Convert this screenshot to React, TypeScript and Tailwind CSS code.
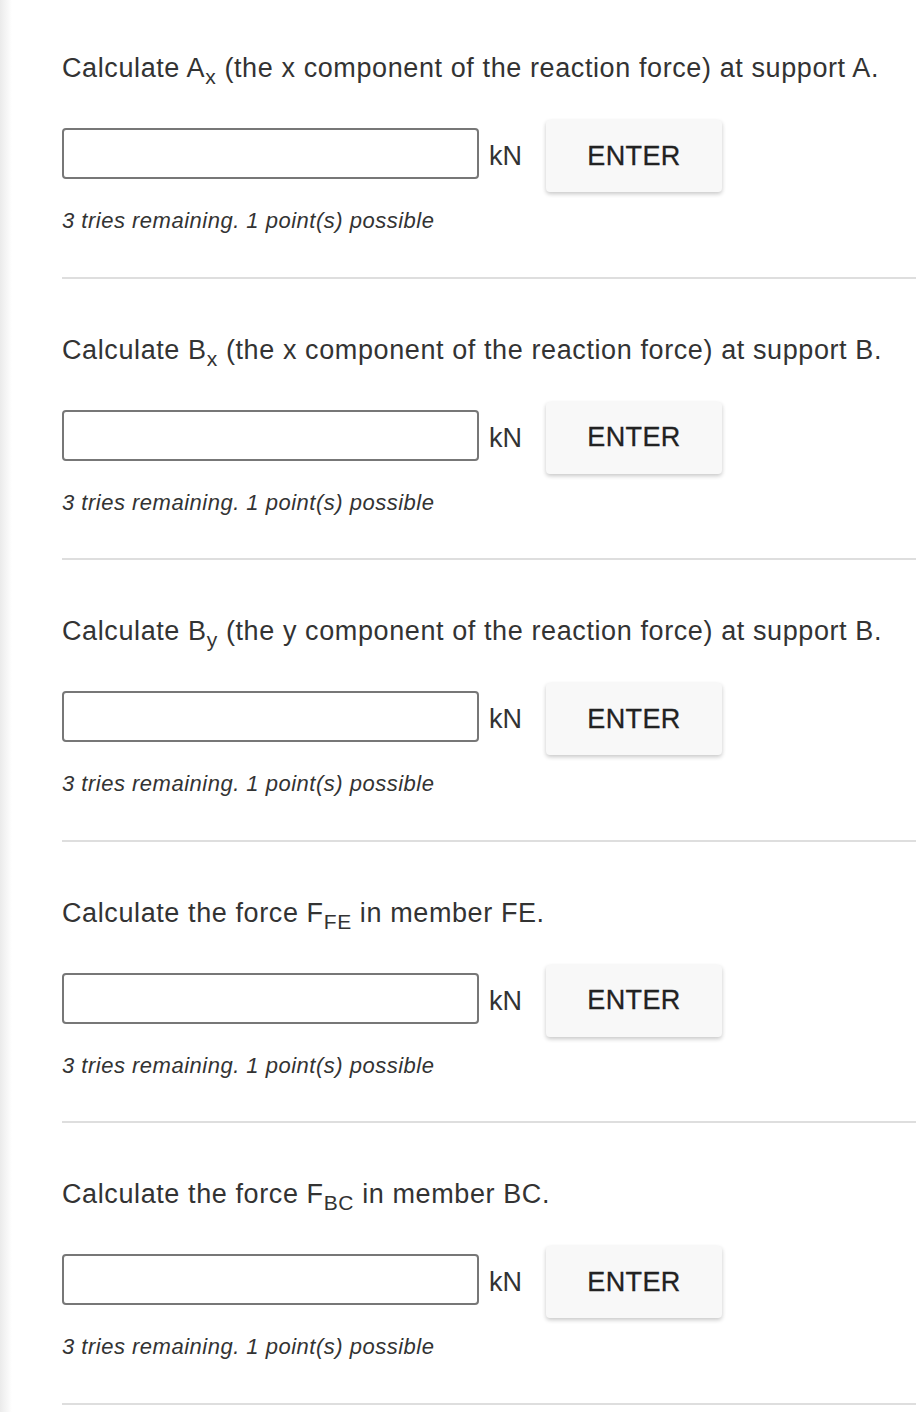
import React from 'react'

interface Question {
    before: string
    sub: string
    after: string
}

const questions: Question[] = [
    { before: 'Calculate A', sub: 'x', after: ' (the x component of the reaction force) at support A.' },
    { before: 'Calculate B', sub: 'x', after: ' (the x component of the reaction force) at support B.' },
    { before: 'Calculate B', sub: 'y', after: ' (the y component of the reaction force) at support B.' },
    { before: 'Calculate the force F', sub: 'FE', after: ' in member FE.' },
    { before: 'Calculate the force F', sub: 'BC', after: ' in member BC.' },
]

const QuestionBlock: React.FC<{ q: Question; first: boolean }> = ({ q, first }) => {
    return (
        <div className={`${first ? 'pt-[53px]' : 'pt-[56px]'} pb-[42.5px] border-b-2 border-[#dedede]`}>
            {/* Prompt */}
            <p className="h-[30px] text-[27px] leading-[30px] tracking-[0.6px] text-[#333] whitespace-nowrap">
                {q.before}
                <sub className="text-[21px] relative top-[1px] align-sub leading-none">{q.sub}</sub>
                {q.after}
            </p>

            {/* Answer row */}
            <div className="mt-[37px] flex items-start h-[72px]">
                <input
                    type="text"
                    className="mt-[8px] w-[417px] h-[51px] border-2 border-[#777] rounded-[4px] bg-white px-2 text-[22px] outline-none"
                />
                <span className="ml-[10px] mt-[21px] text-[27px] leading-[30px] text-[#333]">kN</span>
                <button className="ml-[24px] w-[176px] h-[72px] rounded-[4px] bg-[#f8f8f8] shadow-[0_2px_4px_rgba(0,0,0,0.22)] text-[27px] font-medium text-[#222] tracking-[0.4px] [-webkit-text-stroke:0.3px_#222]">
                    ENTER
                </button>
            </div>

            {/* Tries */}
            <p className="mt-[16px] h-[26px] text-[22px] leading-[26px] tracking-[0.5px] italic text-[#333]">
                3 tries remaining. 1 point(s) possible
            </p>
        </div>
    )
}

export default function App() {
    return (
        <div
            className="w-[916px] h-[1412px] overflow-hidden bg-[linear-gradient(to_right,#ebebeb,#ffffff_12px)] pl-[62px]"
            style={{ fontFamily: '"Liberation Sans", Arial, sans-serif' }}
        >
            {questions.map((q, idx) => (
                <QuestionBlock key={idx} q={q} first={idx === 0} />
            ))}
        </div>
    )
}
